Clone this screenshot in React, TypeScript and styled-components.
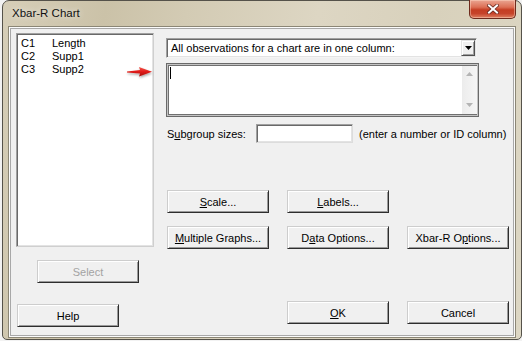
import styled, { createGlobalStyle, css } from "styled-components";

const GlobalStyle = createGlobalStyle`
  html, body {
    margin: 0;
    padding: 0;
    background: #f2f2f2;
    overflow: hidden;
  }
  * {
    box-sizing: border-box;
  }
`;

const UI_FONT = `"Liberation Sans", Arial, sans-serif`;

const sunken = css`
  border: 1px solid;
  border-color: #a0a0a0 #f4f4f4 #f4f4f4 #a0a0a0;
  box-shadow: inset 1px 1px 0 #696969, inset -1px -1px 0 #e3e3e3;
  background: #fff;
`;

const Window = styled.div`
  margin-left: 2px;
  width: 520px;
  height: 340px;
  border: 1px solid #55524a;
  border-radius: 7px 7px 5px 5px;
  background: linear-gradient(
    100deg,
    #d6ceb8 0%,
    #cbc2a8 18%,
    #d3cbb4 32%,
    #ddd6c3 55%,
    #d8d1bc 75%,
    #ddd7c4 100%
  );
  padding: 0 5px 1px 5px;
  display: flex;
  flex-direction: column;
  font-family: ${UI_FONT};
`;

const TitleBar = styled.div`
  height: 25px;
  display: flex;
  align-items: flex-start;
  justify-content: space-between;
`;

const Title = styled.div`
  font-size: 11.5px;
  color: #111;
  padding: 6px 0 0 4px;
  text-shadow: 0 0 6px rgba(255, 255, 255, 0.8);
`;

const CloseButton = styled.div`
  width: 47px;
  height: 19px;
  margin: -1px 0 0 0;
  border: 1px solid #6e2a1c;
  border-top: none;
  border-radius: 0 0 5px 5px;
  background: linear-gradient(
    180deg,
    #eaa592 0%,
    #dc6f55 40%,
    #c43d22 55%,
    #c6432a 75%,
    #de7f60 100%
  );
  box-shadow: inset 0 0 0 1px rgba(255, 220, 200, 0.45);
  display: flex;
  align-items: center;
  justify-content: center;
`;

const Client = styled.div`
  flex: 1;
  position: relative;
  background: #f0f0f0;
  border: 1px solid #8b8675;
  box-shadow: inset 0 0 0 1px #fbfbfb, inset 0 0 0 2px #a8a8a8;
  padding: 2px;
  display: flex;
  flex-direction: column;
  font-size: 11px;
  color: #000;
`;

const Top = styled.div`
  display: flex;
  padding: 4px 0 0 5px;
`;

const LeftCol = styled.div`
  width: 138px;
  display: flex;
  flex-direction: column;
`;

const ListBox = styled.div`
  ${sunken};
  border-color: #a0a0a0 #cfcfcf #cfcfcf #a0a0a0;
  height: 214px;
  padding: 3px 0 0 4px;
`;

const ListRow = styled.div`
  height: 13px;
  line-height: 13px;
  display: grid;
  grid-template-columns: 31px auto;
  white-space: nowrap;
`;

const RightCol = styled.div`
  margin-left: 12px;
  width: 345px;
  display: flex;
  flex-direction: column;
`;

const Combo = styled.div`
  ${sunken};
  margin-top: 5px;
  width: 311px;
  height: 20px;
  display: flex;
  align-items: center;
  padding: 1px 1px 1px 4px;
`;

const ComboText = styled.span`
  flex: 1;
  white-space: nowrap;
`;

const DropButton = styled.div`
  width: 14px;
  height: 16px;
  background: #f0f0f0;
  border: 1px solid;
  border-color: #e3e3e3 #505050 #505050 #e3e3e3;
  box-shadow: inset 1px 1px 0 #fff, inset -1px -1px 0 #a0a0a0;
  display: flex;
  align-items: center;
  justify-content: center;
`;

const TextArea = styled.div`
  margin-top: 5px;
  width: 313px;
  height: 54px;
  background: #fff;
  border: 1px solid #6a6a6a;
  box-shadow: inset 0 0 0 1px #c4c4c4, inset 0 0 0 2px #707070;
  padding: 2px 1px 2px 2px;
  display: flex;
`;

const TextField = styled.div`
  flex: 1;
  padding: 1px 0 0 1px;
`;

const Caret = styled.div`
  width: 1px;
  height: 12px;
  background: #000;
`;

const ScrollBar = styled.div`
  width: 15px;
  background: linear-gradient(90deg, #ececec, #f6f6f6);
  display: flex;
  flex-direction: column;
  justify-content: space-between;
  align-items: center;
  padding: 6px 0 7px 0;
`;

const SubRow = styled.div`
  margin-top: 7px;
  display: grid;
  grid-template-columns: 90px 97px auto;
  align-items: center;
  white-space: nowrap;
`;

const SubLabel = styled.span`
  padding-left: 1px;
`;

const SubInput = styled.div`
  ${sunken};
  border-color: #a0a0a0 #dcdcdc #dcdcdc #a0a0a0;
  height: 19px;
`;

const Hint = styled.span`
  padding-left: 6px;
`;

const ButtonGrid = styled.div`
  margin-top: 47px;
  margin-left: 1px;
  display: grid;
  grid-template-columns: repeat(3, 102px);
  column-gap: 18px;
  row-gap: 13px;
`;

const Btn = styled.div<{ $disabled?: boolean; $nudge?: number }>`
  width: 102px;
  height: 23px;
  margin-top: ${(p) => p.$nudge ?? 0}px;
  background: #f0f0f0;
  border: 1px solid;
  border-color: #cdcdcd #2e2e2e #2e2e2e #cdcdcd;
  box-shadow: inset 1px 1px 0 #fff, inset -1px -1px 0 #9a9a9a;
  display: flex;
  align-items: center;
  justify-content: center;
  font-size: 11px;
  white-space: nowrap;
  color: ${(p) => (p.$disabled ? "#a3a3a3" : "#000")};
`;

const Key = styled.span`
  text-decoration: underline;
`;

const SelectWrap = styled.div`
  margin: 13px 0 0 21px;
`;

const Bottom = styled.div`
  display: flex;
  align-items: flex-start;
  padding: 18px 0 0 6px;
`;

const Spacer = styled.div`
  width: 168px;
`;

const RightButtons = styled.div`
  display: flex;
  gap: 18px;
`;

const Arrow = styled.svg`
  position: absolute;
  left: 118px;
  top: 39px;
  overflow: visible;
`;

const Triangle = ({ color, up }: { color: string; up?: boolean }) => (
  <svg width="7" height="4" viewBox="0 0 7 4">
    <polygon points={up ? "0,4 7,4 3.5,0" : "0,0 7,0 3.5,4"} fill={color} />
  </svg>
);

const columns = [
  ["C1", "Length"],
  ["C2", "Supp1"],
  ["C3", "Supp2"],
];

export default function App() {
  return (
    <>
      <GlobalStyle />
      <Window>
        <TitleBar>
          <Title>Xbar-R Chart</Title>
          <CloseButton>
            <svg width="12" height="10" viewBox="0 0 12 10">
              <path d="M2 1.5 L10 8.5 M10 1.5 L2 8.5" stroke="#6b2a20" strokeWidth="3.6" strokeLinecap="square" />
              <path d="M2 1.5 L10 8.5 M10 1.5 L2 8.5" stroke="#fff" strokeWidth="2" strokeLinecap="square" />
            </svg>
          </CloseButton>
        </TitleBar>
        <Client>
          <Top>
            <LeftCol>
              <ListBox>
                {columns.map(([id, name]) => (
                  <ListRow key={id}>
                    <span>{id}</span>
                    <span>{name}</span>
                  </ListRow>
                ))}
              </ListBox>
              <SelectWrap>
                <Btn $disabled>Select</Btn>
              </SelectWrap>
            </LeftCol>
            <RightCol>
              <Combo>
                <ComboText>All observations for a chart are in one column:</ComboText>
                <DropButton>
                  <Triangle color="#000" />
                </DropButton>
              </Combo>
              <TextArea>
                <TextField>
                  <Caret />
                </TextField>
                <ScrollBar>
                  <Triangle color="#b4b4b4" up />
                  <Triangle color="#b4b4b4" />
                </ScrollBar>
              </TextArea>
              <SubRow>
                <SubLabel>
                  S<Key>u</Key>bgroup sizes:
                </SubLabel>
                <SubInput />
                <Hint>(enter a number or ID column)</Hint>
              </SubRow>
              <ButtonGrid>
                <Btn>
                  <Key>S</Key>cale...
                </Btn>
                <Btn>
                  <Key>L</Key>abels...
                </Btn>
                <div />
                <Btn>
                  <Key>M</Key>ultiple Graphs...
                </Btn>
                <Btn>
                  D<Key>a</Key>ta Options...
                </Btn>
                <Btn>
                  Xbar-R O<Key>p</Key>tions...
                </Btn>
              </ButtonGrid>
            </RightCol>
          </Top>
          <Bottom>
            <Btn $nudge={3}>Help</Btn>
            <Spacer />
            <RightButtons>
              <Btn>
                <Key>O</Key>K
              </Btn>
              <Btn>Cancel</Btn>
            </RightButtons>
          </Bottom>
          <Arrow width="27" height="13" viewBox="0 0 27 13">
            <defs>
              <linearGradient id="arrowFill" x1="0" y1="0" x2="0" y2="1">
                <stop offset="0" stopColor="#f25a4e" />
                <stop offset="0.5" stopColor="#e01b17" />
                <stop offset="1" stopColor="#a50f0c" />
              </linearGradient>
              <filter id="arrowShadow" x="-20%" y="-30%" width="150%" height="180%">
                <feDropShadow dx="0.5" dy="1.5" stdDeviation="1" floodColor="#000" floodOpacity="0.35" />
              </filter>
            </defs>
            <polygon
              points="0,5.4 13,4 12,1 25,5.8 12,10.6 13,7.6 0,6.6"
              fill="url(#arrowFill)"
              filter="url(#arrowShadow)"
            />
          </Arrow>
        </Client>
      </Window>
    </>
  );
}
